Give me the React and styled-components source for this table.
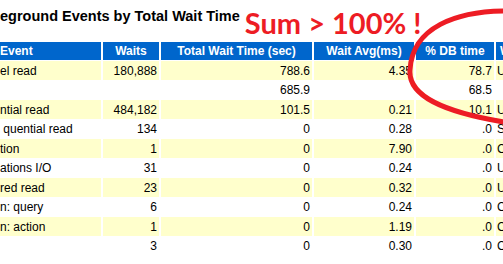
import React from 'react'
import styled, { createGlobalStyle } from 'styled-components'

const GlobalStyle = createGlobalStyle`
    html, body {
        margin: 0;
        padding: 0;
        background: #fff;
    }
    body {
        font-family: "Liberation Sans", Arial, sans-serif;
    }
`

const Page = styled.div`
    position: relative;
    width: 503px;
    height: 264px;
    overflow: hidden;
    background: #fff;
`

const TitleRow = styled.div`
    display: flex;
    align-items: flex-start;
    height: 41px;
`

const Title = styled.h3`
    margin: 7.5px 0 0 0;
    font: bold 14.5px/17px "Liberation Sans", Arial, sans-serif;
    color: #000;
    white-space: nowrap;
`

const Callout = styled.span`
    margin: 8px 0 0 5px;
    font: 700 29px/29px Lato, "Liberation Sans", sans-serif;
    color: #ed1c24;
    white-space: nowrap;
`

const Table = styled.table`
    margin-left: -2px;
    width: 564px;
    table-layout: fixed;
    border-collapse: separate;
    border-spacing: 2px 1px;
    font: 12px/14px "Liberation Sans", Arial, sans-serif;
    color: #000;
`

const Th = styled.th`
    box-sizing: border-box;
    width: ${p => p.$w}px;
    height: 18px;
    padding: 1px ${p => (p.$left ? 0 : 4)}px 1px;
    background: #0066cc;
    color: #fff;
    font-weight: bold;
    text-align: ${p => (p.$left ? 'left' : 'center')};
    white-space: nowrap;
    overflow: hidden;
`

const Row = styled.tr`
    background: transparent;
`

const Td = styled.td`
    box-sizing: border-box;
    height: 18.5px;
    padding: 1px 2px 0 ${p => (p.$text ? (p.$first ? 0 : 1) : 2)}px;
    background: ${p => (p.$shade ? '#ffffcc' : '#fff')};
    text-align: ${p => (p.$text ? 'left' : 'right')};
    vertical-align: middle;
    white-space: nowrap;
    overflow: hidden;
`

const Ring = styled.svg`
    position: absolute;
    left: 0;
    top: 0;
    pointer-events: none;
`

const columns = [
    { label: 'Event', w: 101, left: true },
    { label: 'Waits', w: 56 },
    { label: 'Total Wait Time (sec)', w: 151 },
    { label: 'Wait Avg(ms)', w: 100 },
    { label: '% DB time', w: 78 },
    { label: 'Wait Class', w: 64 },
]

const rows = [
    ['el read', '180,888', '788.6', '4.35', '78.7', 'U'],
    ['', '', '685.9', '', '68.5', ''],
    ['ntial read', '484,182', '101.5', '0.21', '10.1', 'U'],
    ['\u00a0quential read', '134', '0', '0.28', '.0', 'S'],
    ['tion', '1', '0', '7.90', '.0', 'C'],
    ['ations I/O', '31', '0', '0.24', '.0', 'U'],
    ['red read', '23', '0', '0.32', '.0', 'U'],
    ['n: query', '6', '0', '0.24', '.0', 'C'],
    ['n: action', '1', '0', '1.19', '.0', 'C'],
    ['', '3', '0', '0.30', '.0', 'C'],
]

function App() {
    return (
        <Page>
            <GlobalStyle />
            <TitleRow>
                <Title>eground Events by Total Wait Time</Title>
                <Callout>Sum &gt; 100% !</Callout>
            </TitleRow>
            <Table>
                <thead>
                    <tr>
                        {columns.map(c => (
                            <Th key={c.label} $w={c.w} $left={c.left}>{c.label}</Th>
                        ))}
                    </tr>
                </thead>
                <tbody>
                    {rows.map((r, i) => (
                        <Row key={i}>
                            {r.map((v, j) => (
                                <Td
                                    key={j}
                                    $shade={i % 2 === 0}
                                    $text={j === 0 || j === 5}
                                    $first={j === 0}
                                >
                                    {v}
                                </Td>
                            ))}
                        </Row>
                    ))}
                </tbody>
            </Table>
            <Ring width="503" height="264" viewBox="0 0 503 264">
                <path
                    d="M512 11 C455 10 412 28 410 70 C408 95 440 112 510 123"
                    stroke="#ed1c24"
                    strokeWidth="5"
                    fill="none"
                    strokeLinecap="round"
                />
            </Ring>
        </Page>
    )
}

export default App
